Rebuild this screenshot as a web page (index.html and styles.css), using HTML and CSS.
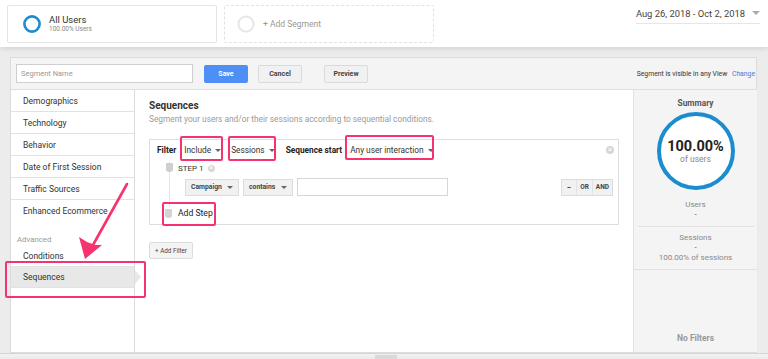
FILE: index.html
```html
<!DOCTYPE html>
<html>
<head>
<meta charset="utf-8">
<link rel="stylesheet" href="styles.css">
</head>
<body>
<div class="page">
  <header class="top">
    <div class="seg-card">
      <svg class="ring" width="20" height="20" viewBox="0 0 20 20"><circle cx="10" cy="10" r="7.6" fill="none" stroke="#1b8dcf" stroke-width="2.6"/></svg>
      <div class="seg-text">
        <div class="seg-name">All Users</div>
        <div class="seg-sub">100.00% Users</div>
      </div>
    </div>
    <div class="seg-card add">
      <svg class="ring" width="20" height="20" viewBox="0 0 20 20"><circle cx="10" cy="10" r="7.6" fill="none" stroke="#e6e6e6" stroke-width="2"/></svg>
      <div class="add-text">+ Add Segment</div>
    </div>
    <div class="date">Aug 26, 2018 - Oct 2, 2018 <span class="caret gray"></span></div>
  </header>

  <div class="stage">
    <div class="panel">
      <div class="toolbar">
        <div class="name-input">Segment Name</div>
        <div class="btn save">Save</div>
        <div class="btn cancel">Cancel</div>
        <div class="btn preview">Preview</div>
        <div class="vis">Segment is visible in any View <span class="link">Change</span></div>
      </div>
      <div class="body">
        <nav class="nav">
          <div class="nav-item">Demographics</div>
          <div class="nav-item">Technology</div>
          <div class="nav-item">Behavior</div>
          <div class="nav-item">Date of First Session</div>
          <div class="nav-item">Traffic Sources</div>
          <div class="nav-item last">Enhanced Ecommerce</div>
          <div class="nav-label">Advanced</div>
          <div class="nav-item">Conditions</div>
          <div class="nav-item selected">Sequences</div>
        </nav>
        <main class="content">
          <h1 class="title">Sequences</h1>
          <p class="desc">Segment your users and/or their sessions according to sequential conditions.</p>
          <div class="filter">
            <div class="filter-row">
              <span class="bold lbl-filter">Filter</span>
              <span class="dd dd-include">Include <span class="caret"></span></span>
              <span class="dd dd-sessions">Sessions <span class="caret"></span></span>
              <span class="bold lbl-start">Sequence start</span>
              <span class="dd">Any user interaction <span class="caret"></span></span>
              <span class="xicon">×</span>
            </div>
            <div class="steps">
              <div class="step-head"><span class="marker"></span>STEP 1 <span class="minix">×</span></div>
              <div class="cond-row">
                <span class="gbtn w53">Campaign <span class="caret"></span></span>
                <span class="gbtn w50">contains <span class="caret"></span></span>
                <span class="tinput"></span>
                <span class="spacer"></span>
                <span class="bgroup"><span class="gb">−</span><span class="gb">OR</span><span class="gb">AND</span></span>
              </div>
              <div class="add-step"><span class="marker"></span>Add Step</div>
            </div>
          </div>
          <div class="add-filter">+ Add Filter</div>
        </main>
        <aside class="summary">
          <div class="sum-title">Summary</div>
          <div class="big-ring">
            <div class="pct">100.00%</div>
            <div class="ofu">of users</div>
          </div>
          <div class="stat">
            <div>Users</div>
            <div>-</div>
          </div>
          <div class="stat sessions">
            <div>Sessions</div>
            <div>-</div>
            <div>100.00% of sessions</div>
          </div>
          <div class="nofilters">No Filters</div>
        </aside>
      </div>
    </div>
    <div class="scrollbar"><span class="thumb"></span></div>
  </div>

  <div class="hl hl-include"></div>
  <div class="hl hl-sessions"></div>
  <div class="hl hl-start"></div>
  <div class="hl hl-addstep"></div>
  <div class="hl hl-seq"></div>
  <svg class="arrow" width="768" height="359" viewBox="0 0 768 359">
    <path d="M127 184 L93 245" stroke="#f7336f" stroke-width="2.6" fill="none" stroke-linecap="round"/>
    <path d="M85 259 L79 237 L87 242 L95 245 L102 245 Z" fill="#f7336f"/>
  </svg>
</div>
</body>
</html>
```

FILE: styles.css
```css
* { box-sizing: border-box; }
html, body { margin: 0; padding: 0; }
body {
  width: 768px; height: 359px; overflow: hidden;
  font-family: Roboto, "Liberation Sans", Arial, sans-serif;
  color: #333; background: #ececec;
}
.page { position: relative; width: 768px; height: 359px; }

.top {
  height: 47px; background: #fff; display: flex; align-items: flex-start;
  padding: 5px 0 0 7px; box-shadow: 0 2px 5px rgba(0,0,0,0.10);
  position: relative; z-index: 1;
}
.seg-card {
  width: 210px; height: 38px; border: 1px solid #e4e4e4; border-radius: 2px;
  display: flex; align-items: center; padding-left: 14px; margin-right: 7px;
}
.seg-card.add { border: 1px dashed #e2e2e2; padding-left: 11px; }
.ring { flex: none; }
.seg-text { margin-left: 7px; }
.seg-name { font-size: 9.5px; color: #333; line-height: 11px; }
.seg-sub { font-size: 6.5px; color: #888; line-height: 9px; }
.add-text { margin-left: 7px; font-size: 8.5px; color: #999; }
.date {
  margin-left: auto; margin-right: 8px; margin-top: 2px;
  font-size: 9.4px; color: #444; padding-bottom: 4px; border-bottom: 1px solid #e6e6e6;
  height: 17px; display: flex; align-items: center; gap: 4px;
}

.caret {
  display: inline-block; width: 0; height: 0; vertical-align: middle;
  border-left: 3px solid transparent; border-right: 3px solid transparent;
  border-top: 3px solid #666; margin-left: 5px;
}
.caret.gray { border-top-color: #aaa; border-left-width: 4px; border-right-width: 4px; border-top-width: 4px; margin-left: 3px; }

.stage { padding: 10px 11px 0 10px; }
.panel { border: 1px solid #dcdcdc; background: #fff; height: 296px; display: flex; flex-direction: column; }
.toolbar {
  height: 32px; flex: none; background: #f4f4f4; border-bottom: 1px solid #dedede;
  display: flex; align-items: center; padding-left: 5px;
}
.name-input {
  width: 177px; height: 19px; border: 1px solid #cfcfcf; background: #fff;
  font-size: 7.5px; color: #999; display: flex; align-items: center; padding-left: 4px;
}
.btn {
  height: 18px; width: 44px; font-size: 7px; font-weight: 700; display: flex;
  align-items: center; justify-content: center; border-radius: 2px;
}
.save { background: #4d8ff5; color: #fff; margin-left: 11px; }
.cancel { background: #f1f1f1; border: 1px solid #dadada; color: #444; margin-left: 10px; }
.preview { background: #f1f1f1; border: 1px solid #dadada; color: #444; margin-left: 22px; }
.vis { margin-left: auto; font-size: 6.8px; color: #333; padding-right: 1px; }
.link { color: #3b7dd8; margin-left: 3px; }

.body { flex: 1; display: flex; min-height: 0; }
.nav { width: 124px; flex: none; border-right: 1px solid #dcdcdc; background: #fff; }
.nav-item {
  height: 22px; border-bottom: 1px solid #e2e2e2; font-size: 8.5px; color: #333;
  display: flex; align-items: center; padding-left: 12px; position: relative;
}
.nav-item.last { border-bottom: none; }
.nav-label { font-size: 7.8px; color: #999; padding-left: 6px; margin-top: 11px; height: 12px; display: flex; align-items: center; }
.nav-item.selected { background: #e8e8e8; height: 21px; }
.nav-item.selected::after {
  content: ""; position: absolute; right: -7px; top: 3px;
  border-top: 7px solid transparent; border-bottom: 7px solid transparent;
  border-left: 6px solid #e8e8e8;
}

.content { flex: 1; padding: 10px 14px 0 14px; }
.title { margin: 0; font-size: 10px; font-weight: 700; color: #333; line-height: 12px; }
.desc { margin: 2px 0 0; font-size: 8.3px; color: #9a9a9a; line-height: 11px; }
.filter {
  margin-top: 14px; width: 470px; height: 86px; border: 1px solid #dedede; padding: 0 0 0 7px;
}
.filter-row { display: flex; align-items: center; height: 20px; font-size: 8.3px; position: relative; padding-right: 8px; }
.bold { font-weight: 700; color: #222; }
.lbl-filter { margin-right: 8px; }
.dd { color: #333; display: inline-flex; align-items: center; font-size: 8.3px; }
.dd .caret { margin-left: 4px; }
.dd-include { margin-right: 10px; }
.dd-sessions { margin-right: 11px; }
.lbl-start { margin-right: 8px; }
.xicon {
  position: absolute; right: 4px; top: 6px; width: 8px; height: 8px; border-radius: 50%;
  background: #d6d6d6; color: #fff; font-size: 8px; line-height: 8px; text-align: center;
}
.steps { margin-left: 12px; border-left: 1px solid #e6e6e6; }
.step-head { font-size: 8px; color: #333; height: 12px; margin-top: 2px; display: flex; align-items: center; position: relative; padding-left: 8px; }
.marker {
  position: absolute; left: -4px; top: 1px; width: 7px; height: 9px; background: #cfcfcf;
  border-radius: 1px 1px 3px 3px;
}
.minix {
  display: inline-block; width: 7px; height: 7px; border-radius: 50%; background: #d8d8d8; color: #fff;
  font-size: 7px; line-height: 7px; text-align: center; margin-left: 4px;
}
.cond-row { display: flex; align-items: center; margin: 4px 0 0 15px; height: 18px; width: 428px; }
.gbtn {
  height: 17px; background: #f1f1f1; border: 1px solid #dcdcdc; font-size: 6.8px; font-weight: 700;
  color: #444; display: inline-flex; align-items: center; justify-content: space-between; padding: 0 5px;
  margin-right: 4px;
}
.w53 { width: 54px; }
.w50 { width: 50px; }
.tinput { width: 151px; height: 18px; border: 1px solid #d6d6d6; background: #fff; }
.spacer { flex: 1; }
.bgroup { display: flex; border: 1px solid #dcdcdc; background: #f1f1f1; height: 17px; }
.gb { font-size: 6.5px; font-weight: 700; color: #444; padding: 0 3px; display: flex; align-items: center; border-left: 1px solid #e2e2e2; }
.gb:first-child { border-left: none; padding: 0 5px; font-size: 8px; }
.add-step { position: relative; font-size: 8.6px; color: #222; padding-left: 9px; margin-top: 11px; height: 12px; display: flex; align-items: center; margin-left: -1px; background: #fff; }
.add-step .marker { left: -4px; top: 2px; background: #d4d4d4; }
.add-filter {
  margin-top: 17px; width: 44px; height: 17px; border: 1px solid #dcdcdc; border-radius: 2px; background: #f4f4f4;
  font-size: 6.3px; color: #444; display: flex; align-items: center; justify-content: center;
}

.summary { width: 124px; flex: none; background: #f4f4f4; border-left: 1px solid #e2e2e2; display: flex; flex-direction: column; align-items: center; }
.sum-title { font-size: 8.3px; font-weight: 700; color: #555; margin-top: 8px; }
.big-ring {
  width: 78px; height: 78px; border-radius: 50%; border: 4px solid #1b8dcf; background: #fff;
  margin-top: 4px; display: flex; flex-direction: column; align-items: center; justify-content: center;
}
.pct { font-size: 14.5px; font-weight: 700; color: #222; line-height: 15px; margin-top: 2px; }
.ofu { font-size: 8.5px; color: #888; line-height: 11px; }
.stat { width: 116px; text-align: center; font-size: 8px; color: #888; line-height: 10px; padding-top: 10px; padding-bottom: 6px; border-bottom: 1px solid #e2e2e2; }
.stat div:nth-child(2) { color: #555; }
.stat.sessions { width: 124px; padding-top: 6px; padding-bottom: 6px; }
.nofilters { margin-top: auto; margin-bottom: 9px; font-size: 8.5px; color: #999; font-weight: 700; }

.scrollbar { height: 4px; position: relative; background: #f0f0f0; border-top: 1px solid #d6d6d6; margin-right: -11px; margin-left: -10px; }
.thumb { position: absolute; left: 375px; top: 1px; width: 22px; height: 4px; background: #d9d9d9; }

.hl { position: absolute; border: 2px solid #f7336f; border-radius: 2px; }
.hl-include { left: 180px; top: 136px; width: 43px; height: 25px; }
.hl-sessions { left: 228px; top: 136px; width: 48px; height: 25px; }
.hl-start { left: 345px; top: 135px; width: 89px; height: 25px; }
.hl-addstep { left: 162px; top: 202px; width: 54px; height: 24px; }
.hl-seq { left: 5px; top: 261px; width: 141px; height: 37px; }
.arrow { position: absolute; left: 0; top: 0; pointer-events: none; }
```
